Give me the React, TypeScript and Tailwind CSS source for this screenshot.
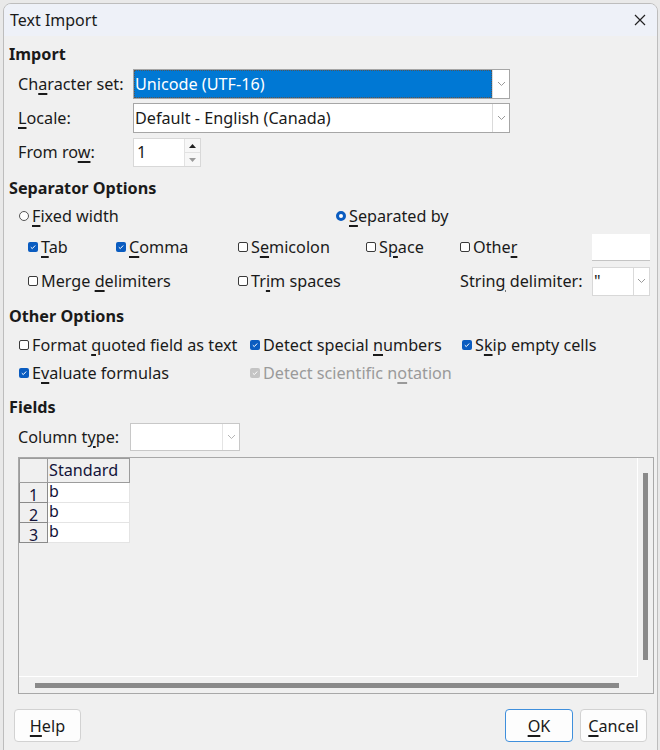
import React from "react";

const U = ({ children }: { children: React.ReactNode }) => (
  <span className="underline underline-offset-[3px] decoration-[1.5px]">{children}</span>
);

const Check = ({ checked, disabled }: { checked?: boolean; disabled?: boolean }) => {
  if (checked) {
    return (
      <span
        className={`inline-flex shrink-0 w-[10px] h-[10px] rounded-[2px] items-center justify-center ${
          disabled ? "bg-[#c4c4c4]" : "bg-[#0a5cc0]"
        }`}
      >
        <svg width="8" height="8" viewBox="0 0 8 8">
          <path d="M1.8 4.2 L3.3 5.6 L6.2 2.5" stroke="white" strokeWidth="1" fill="none" />
        </svg>
      </span>
    );
  }
  return <span className="inline-block shrink-0 w-[10px] h-[10px] rounded-[2px] border border-[#3a3a3a] bg-white" />;
};

const Radio = ({ checked }: { checked?: boolean }) =>
  checked ? (
    <span className="inline-block shrink-0 w-[10px] h-[10px] rounded-full border-[3px] border-[#0a5cc0] bg-white" />
  ) : (
    <span className="inline-block shrink-0 w-[10px] h-[10px] rounded-full border border-[#555] bg-white" />
  );

const Chevron = ({ color = "#9a9a9a" }: { color?: string }) => (
  <svg width="9" height="6" viewBox="0 0 9 6">
    <path d="M1 1 L4.5 4.5 L8 1" stroke={color} strokeWidth="1" fill="none" />
  </svg>
);

const Item = ({
  w,
  children,
  box,
}: {
  w?: string;
  children: React.ReactNode;
  box: React.ReactNode;
}) => (
  <div className={`flex items-center gap-[3px] shrink-0 ${w ?? ""}`}>
    {box}
    <span>{children}</span>
  </div>
);

const Heading = ({ children, cls }: { children: React.ReactNode; cls: string }) => (
  <div className={`h-[24px] flex items-center pl-[5px] font-bold ${cls}`}>{children}</div>
);

export default function App() {
  return (
    <div
      className="w-[660px] h-[750px] overflow-hidden bg-[#e9e9e9] pt-[3px] pl-[3px] text-[16.2px] text-[#1a1a1a]"
      style={{ fontFamily: '"Noto Sans", "Open Sans", sans-serif' }}
    >
      <div className="w-[655px] h-[760px] rounded-t-[8px] border border-[#bdbdbd] bg-[#f0f0f0] overflow-hidden flex flex-col">
        {/* Title bar */}
        <div className="h-[32px] shrink-0 bg-[#eef1f8] flex items-center justify-between pl-[6px] pr-[11px]">
          <span className="text-[16px]">Text Import</span>
          <svg width="12" height="12" viewBox="0 0 12 12">
            <path d="M1 1 L11 11 M11 1 L1 11" stroke="#222" strokeWidth="1.2" />
          </svg>
        </div>

        <Heading cls="mt-[6px]">Import</Heading>

        {/* Character set */}
        <div className="mt-[3px] h-[30px] flex items-center pl-[14px]">
          <span className="w-[115px]">
            Ch<U>a</U>racter set:
          </span>
          <div className="w-[377px] h-[30px] border border-[#a6a6a6] bg-white flex">
            <div className="flex-1 bg-[#0078d4] text-white flex items-center pl-[1px] outline-1 outline-dotted outline-[#555] -outline-offset-1">
              Unicode (UTF-16)
            </div>
            <div className="w-[17px] border-l border-[#dadada] flex items-center justify-center">
              <Chevron />
            </div>
          </div>
        </div>

        {/* Locale */}
        <div className="mt-[4px] h-[30px] flex items-center pl-[14px]">
          <span className="w-[115px]">
            <U>L</U>ocale:
          </span>
          <div className="w-[377px] h-[30px] border border-[#a6a6a6] bg-white flex">
            <div className="flex-1 flex items-center pl-[1px]">Default - English (Canada)</div>
            <div className="w-[17px] border-l border-[#dadada] flex items-center justify-center">
              <Chevron />
            </div>
          </div>
        </div>

        {/* From row */}
        <div className="mt-[5px] h-[29px] flex items-center pl-[14px]">
          <span className="w-[115px]">
            From ro<U>w</U>:
          </span>
          <div className="w-[68px] h-[29px] bg-white border border-[#d8d8d8] flex">
            <div className="flex-1 flex items-center pl-[3px]">1</div>
            <div className="w-[16px] flex flex-col border-l border-[#e2e2e2]">
              <div className="flex-1 flex items-center justify-center border-b border-[#e2e2e2] bg-[#f7f7f7]">
                <svg width="7" height="4" viewBox="0 0 7 4">
                  <path d="M0 4 L3.5 0 L7 4 Z" fill="#222" />
                </svg>
              </div>
              <div className="flex-1 flex items-center justify-center bg-[#f7f7f7]">
                <svg width="7" height="4" viewBox="0 0 7 4">
                  <path d="M0 0 L3.5 4 L7 0 Z" fill="#9a9a9a" />
                </svg>
              </div>
            </div>
          </div>
        </div>

        <Heading cls="mt-[9px]">Separator Options</Heading>

        {/* Fixed / separated */}
        <div className="mt-[4px] h-[24px] flex items-center pl-[15px]">
          <Item w="w-[317px]" box={<Radio />}>
            <U>F</U>ixed width
          </Item>
          <Item box={<Radio checked />}>
            <U>S</U>eparated by
          </Item>
        </div>

        {/* Tab row */}
        <div className="mt-[5px] h-[28px] flex items-center pl-[24px]">
          <Item w="w-[88px]" box={<Check checked />}>
            <U>T</U>ab
          </Item>
          <Item w="w-[122px]" box={<Check checked />}>
            <U>C</U>omma
          </Item>
          <Item w="w-[128px]" box={<Check />}>
            S<U>e</U>micolon
          </Item>
          <Item w="w-[94px]" box={<Check />}>
            S<U>p</U>ace
          </Item>
          <Item w="w-[132px]" box={<Check />}>
            Othe<U>r</U>
          </Item>
          <div className="w-[58px] h-[27px] bg-white border-b border-[#c4c4c4]" />
        </div>

        {/* Merge row */}
        <div className="mt-[5px] h-[30px] flex items-center pl-[24px]">
          <Item w="w-[210px]" box={<Check />}>
            Merge <U>d</U>elimiters
          </Item>
          <Item w="w-[222px]" box={<Check />}>
            Tr<U>i</U>m spaces
          </Item>
          <span className="w-[132px] shrink-0">
            Strin<U>g</U> delimiter:
          </span>
          <div className="w-[58px] h-[29px] bg-white border border-[#d8d8d8] flex">
            <div className="flex-1 flex items-center pl-[1px]">"</div>
            <div className="w-[16px] border-l border-[#dadada] flex items-center justify-center">
              <Chevron />
            </div>
          </div>
        </div>

        <Heading cls="mt-[8px]">Other Options</Heading>

        <div className="mt-[5px] h-[24px] flex items-center pl-[15px]">
          <Item w="w-[231px]" box={<Check />}>
            Format <U>q</U>uoted field as text
          </Item>
          <Item w="w-[212px]" box={<Check checked />}>
            Detect special <U>n</U>umbers
          </Item>
          <Item box={<Check checked />}>
            S<U>k</U>ip empty cells
          </Item>
        </div>

        <div className="mt-[4px] h-[24px] flex items-center pl-[15px]">
          <Item w="w-[231px]" box={<Check checked />}>
            E<U>v</U>aluate formulas
          </Item>
          <div className="flex items-center gap-[3px] text-[#9a9a9a]">
            <Check checked disabled />
            <span>
              Detect scientific n<U>o</U>tation
            </span>
          </div>
        </div>

        <Heading cls="mt-[10px]">Fields</Heading>

        {/* Column type */}
        <div className="mt-[4px] h-[28px] flex items-center pl-[14px]">
          <span className="w-[112px]">
            Column t<U>y</U>pe:
          </span>
          <div className="w-[110px] h-[28px] bg-white border border-[#c8c8c8] flex">
            <div className="flex-1" />
            <div className="w-[17px] border-l border-[#e4e4e4] flex items-center justify-center">
              <Chevron color="#b5b5b5" />
            </div>
          </div>
        </div>

        {/* Table frame */}
        <div className="mt-[6px] ml-[14px] w-[636px] h-[237px] border border-[#a8a8a8] flex flex-col">
          <div className="h-[219px] flex">
            <div className="w-[619px] border-r border-b border-white">
              <div className="flex flex-col text-[#14143a]">
                <div className="flex h-[25px]">
                  <div className="w-[29px] border border-[#9c9c9c] bg-[#f0f0f0]" />
                  <div className="w-[82px] border-y border-r border-[#9c9c9c] bg-[#f0f0f0] flex items-center pl-[1px] leading-none">
                    Standard
                  </div>
                </div>
                {["1", "2", "3"].map((n) => (
                  <div key={n} className="flex h-[20px]">
                    <div className="w-[29px] border-x border-b border-[#8a8a8a] bg-[#f0f0f0] flex items-end justify-center text-[16px] leading-[14px]">
                      {n}
                    </div>
                    <div className="w-[82px] bg-white border-b border-r border-[#e4e4e4] pl-[1px] leading-[17px] text-[16px]">
                      b
                    </div>
                  </div>
                ))}
              </div>
            </div>
            <div className="flex-1 flex justify-center pt-[15px]">
              <div className="w-[5px] h-[187px] bg-[#8a8a8a]" />
            </div>
          </div>
          <div className="flex-1 pl-[16px] pt-[6px]">
            <div className="w-[584px] h-[5px] bg-[#8a8a8a]" />
          </div>
        </div>

        {/* Buttons */}
        <div className="mt-[15px] h-[33px] flex items-center pl-[10px] pr-[10px]">
          <button className="w-[67px] h-[33px] rounded-[4px] border border-[#d2d2d2] bg-[#fdfdfd] pt-[2px]">
            <U>H</U>elp
          </button>
          <div className="flex-1" />
          <button className="w-[68px] h-[33px] rounded-[4px] border border-[#3f8fdc] bg-[#fdfdfd] pt-[2px]">
            <U>O</U>K
          </button>
          <button className="ml-[7px] w-[67px] h-[33px] rounded-[4px] border border-[#d2d2d2] bg-[#fdfdfd] pt-[2px]">
            <U>C</U>ancel
          </button>
        </div>
      </div>
    </div>
  );
}
